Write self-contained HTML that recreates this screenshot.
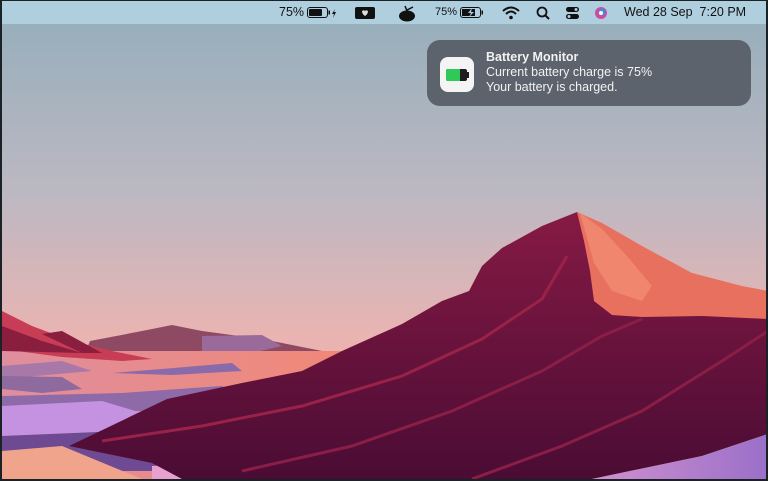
<!DOCTYPE html>
<html><head><style>
body{margin:0;width:768px;height:481px;overflow:hidden;background:#1a2226;font-family:"Liberation Sans",sans-serif}
#s{position:absolute;left:2px;top:1px;width:764px;height:478px;overflow:hidden}
#bar{position:absolute;left:0;top:0;width:764px;height:23px;background:#afcfdf;font-size:12.5px;color:#111}
#bar span{position:absolute;top:4px}
#n{position:absolute;left:425px;top:39px;width:324px;height:66px;border-radius:13px;background:#5c636d;color:#f2f2f2;font-size:12.5px;line-height:15px}
</style></head><body><div id="s">
<svg width="764" height="478" style="position:absolute;left:0;top:0">
<defs>
<linearGradient id="sky" x1="0" y1="0" x2="0" y2="1"><stop offset="0" stop-color="#93aebb"/><stop offset=".4" stop-color="#bcb8c2"/><stop offset=".7" stop-color="#e9b4b2"/><stop offset="1" stop-color="#f0a8a0"/></linearGradient>
<linearGradient id="gr" x1="0" y1="0" x2="1" y2="0"><stop offset="0" stop-color="#e08e9e"/><stop offset="1" stop-color="#f08878"/></linearGradient>
<linearGradient id="mt" x1="0" y1="0" x2="0" y2="1"><stop offset="0" stop-color="#861a44"/><stop offset="1" stop-color="#4a0c34"/></linearGradient>
<linearGradient id="lv" x1="0" y1="0" x2="1" y2="0"><stop offset="0" stop-color="#d090d0"/><stop offset="1" stop-color="#9a70c8"/></linearGradient>
</defs>
<rect width="764" height="478" fill="url(#sky)"/>
<path d="M88 340 L140 330 L170 324 L200 330 L260 338 L330 352 L330 360 L80 360Z" fill="#8e4a62"/>
<path d="M200 335 L260 334 L280 345 L250 352 L200 350Z" fill="#9a6a9a"/>
<path d="M0 350 L340 350 L340 478 L0 478Z" fill="url(#gr)"/>
<path d="M0 365 L60 360 L90 370 L0 378Z" fill="#a878a8"/>
<path d="M110 372 L160 368 L230 362 L240 370 L170 374Z" fill="#8a6aaa"/>
<path d="M0 375 L60 376 L80 388 L40 392 L0 388Z" fill="#8e6a9e"/>
<path d="M0 395 L120 392 L220 385 L230 392 L140 410 L0 410Z" fill="#8e6aa8"/>
<path d="M0 405 L100 400 L140 412 L120 430 L0 435Z" fill="#c592e2"/>
<path d="M0 435 L120 430 L240 440 L300 450 L300 470 L0 470Z" fill="#6e4a92"/>
<path d="M0 450 L60 445 L140 478 L0 478Z" fill="#f0a48c"/>
<path d="M150 465 L200 462 L240 478 L150 478Z" fill="#e8a0d0"/>
<path d="M0 310 L30 325 L70 340 L110 350 L150 358 L120 360 L60 356 L0 348Z" fill="#c83c56"/>
<path d="M0 325 L40 340 L80 352 L0 350Z" fill="#8a1e3e"/>
<path d="M40 333 L60 330 L100 352 L80 352Z" fill="#8a1e3e"/>
<path d="M67 445 L165 398 L240 382 L300 370 L340 350 L400 323 L440 300 L467 290 L480 265 L500 247 L540 225 L575 211 L610 240 L650 265 L700 288 L766 297 L766 433 L700 455 L590 478 L180 478 L150 462Z" fill="url(#mt)"/>
<path d="M575 211 L600 222 L640 245 L690 272 L740 285 L766 290 L766 318 L700 315 L640 316 L610 314 L592 300 L588 270 L582 240Z" fill="#e8705e"/>
<path d="M578 212 L600 228 L625 255 L650 285 L640 300 L610 290 L592 262Z" fill="#f08a70" opacity=".85"/>
<path d="M100 440 L200 425 L300 405 L400 375 L480 338 L540 298 L565 255" stroke="#9a2248" stroke-width="3" fill="none"/>
<path d="M240 470 L350 445 L450 410 L540 370 L600 335 L640 318" stroke="#8a1e46" stroke-width="3" fill="none"/>
<path d="M470 478 L560 445 L640 410 L720 360 L766 330" stroke="#8a1e46" stroke-width="3" fill="none"/>
<path d="M766 433 L700 455 L590 478 L766 478Z" fill="url(#lv)"/>
</svg>
<div id="bar">
<span style="left:277px">75%</span>
<svg style="position:absolute;left:305px;top:6px" width="32" height="12"><rect x="0.5" y="0.5" width="20" height="10" rx="2.5" fill="none" stroke="#111"/><rect x="2" y="2" width="13" height="7" rx="1" fill="#111"/><rect x="21.5" y="3.5" width="1.5" height="4" fill="#111"/><path d="M28 2 L25 7 L27 7 L26 11 L29 5 L27 5Z" fill="#111"/></svg>
<svg style="position:absolute;left:352px;top:5px" width="22" height="14"><rect x="1" y="1" width="20" height="12" rx="2" fill="#111"/><path d="M8 5 Q11 3 11 6 Q11 3 14 5 Q14 8 11 10 Q8 8 8 5Z" fill="#ddd"/></svg>
<svg style="position:absolute;left:395px;top:3px" width="20" height="18"><ellipse cx="10" cy="12" rx="8" ry="5.5" fill="#111"/><path d="M10 7 L8 2 M10 6 L16 3" stroke="#111" stroke-width="1.5"/></svg>
<span style="left:433px;font-size:11px;top:5px">75%</span>
<svg style="position:absolute;left:458px;top:6px" width="28" height="12"><rect x="0.5" y="0.5" width="20" height="10" rx="2.5" fill="none" stroke="#111"/><rect x="2" y="2" width="13" height="7" fill="#111"/><path d="M12 1 L8 6 L11 6 L9 10 L14 5 L11 5Z" fill="#afcfdf"/><rect x="21.5" y="3.5" width="1.5" height="4" fill="#111"/></svg>
<svg style="position:absolute;left:500px;top:4px" width="18" height="15"><path d="M1 6 Q9 -1 17 6" stroke="#111" stroke-width="2" fill="none"/><path d="M4 9 Q9 4 14 9" stroke="#111" stroke-width="2" fill="none"/><circle cx="9" cy="12.5" r="1.8" fill="#111"/></svg>
<svg style="position:absolute;left:534px;top:5px" width="16" height="15"><circle cx="6" cy="6" r="4.5" stroke="#111" stroke-width="1.8" fill="none"/><path d="M9.5 9.5 L13 13" stroke="#111" stroke-width="2"/></svg>
<svg style="position:absolute;left:563px;top:5px" width="16" height="15"><rect x="1" y="1" width="13" height="5" rx="2.5" fill="#111"/><rect x="1" y="8" width="13" height="5" rx="2.5" fill="#111"/><circle cx="11" cy="3.5" r="1.5" fill="#afcfdf"/><circle cx="4" cy="10.5" r="1.5" fill="#afcfdf"/></svg>
<svg style="position:absolute;left:592px;top:5px" width="14" height="14"><circle cx="7" cy="7" r="6" fill="#d04aa0"/><circle cx="8" cy="6" r="3.5" fill="#3a8ee0"/><circle cx="7" cy="7" r="2" fill="#fff"/></svg>
<span style="left:622px">Wed 28 Sep&nbsp; 7:20 PM</span>
</div>
<div id="n">
<div style="position:absolute;left:13px;top:17px;width:34px;height:35px;border-radius:8px;background:#f4f4f4"></div>
<div style="position:absolute;left:19px;top:29px;width:21px;height:12px;border-radius:2px;background:#1e1e1e"></div>
<div style="position:absolute;left:19px;top:29px;width:14px;height:12px;border-radius:2px 0 0 2px;background:#2ec956"></div>
<div style="position:absolute;left:40px;top:32px;width:2px;height:6px;background:#1e1e1e"></div>
<div style="position:absolute;left:59px;top:10px"><b>Battery Monitor</b><br>Current battery charge is 75%<br>Your battery is charged.</div>
</div>
</div></body></html>
